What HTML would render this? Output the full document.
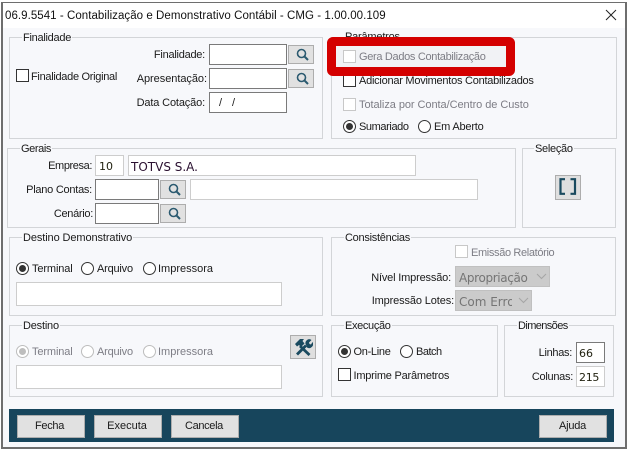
<!DOCTYPE html>
<html><head><meta charset="utf-8">
<style>
html,body{margin:0;padding:0;background:#fff}
#w{position:relative;width:628px;height:450px;overflow:hidden;background:#fff;font-family:"Liberation Sans",sans-serif;font-size:11px;color:#1a1a1a}
#w div,#w span,#w svg{position:absolute;box-sizing:border-box}
.t{white-space:nowrap;line-height:16px;height:16px;margin-top:1px}
.r{text-align:right}
.g{color:#7d7d85}
.gb{border:1px solid #d3d5d8}
.lg{background:#f7f8fb;padding:0 1px;line-height:12px;height:12px;white-space:nowrap;margin-top:1px}
.i{background:#fff;border:1px solid #cdcdcd}
.d{background:#fff;border:1px solid #7a7a7a}
.b{background:#e1e1e1;border:1px solid #adadad}
.bt{background:#e1e1e1;border:1px solid #adadad;text-align:center;line-height:21px;height:23px;width:68px;top:415px}
.c{width:13px;height:13px;background:#fff;border:1px solid #333}
.c.x{border-color:#c8c8c8}
.o{width:13px;height:13px;border-radius:50%;background:#fff;border:1px solid #333}
.o.x{border-color:#bdbdbd}
.o i{position:absolute;left:2px;top:2px;width:7px;height:7px;border-radius:50%;background:#333}
.o.x i{background:#bdbdbd}
.w{font-family:"DejaVu Sans",sans-serif;font-size:12px;letter-spacing:0}
.n{font-family:"DejaVu Sans",sans-serif;font-size:11px;letter-spacing:0}
</style></head><body>
<div id="w">
<div style="left:1px;top:2px;width:626px;height:447px;background:#f7f8fb;border:1px solid #6e6e6e;border-width:1px 2px 2px 2px"></div>
<div style="left:3px;top:3px;width:622px;height:25px;background:#fff"></div>
<div class="t" style="left:5px;top:7px;font-size:11.5px;letter-spacing:.05px;color:#111">06.9.5541 - Contabilização e Demonstrativo Contábil - CMG - 1.00.00.109</div>
<svg style="left:605px;top:9px" width="12" height="12"><path d="M1 1L11 11M11 1L1 11" stroke="#222" stroke-width="1" fill="none"/></svg>

<!-- groups -->
<div class="gb" style="left:9px;top:37px;width:314px;height:102px"></div>
<div class="lg" style="left:22px;top:31px;letter-spacing:-.27px">Finalidade</div>
<div class="gb" style="left:331px;top:37px;width:286px;height:102px"></div>
<div class="lg" style="left:344px;top:30px;letter-spacing:-.2px">Parâmetros</div>
<div class="gb" style="left:7px;top:148px;width:509px;height:80px"></div>
<div class="lg" style="left:20px;top:142px;letter-spacing:-.4px">Gerais</div>
<div class="gb" style="left:522px;top:148px;width:94px;height:80px"></div>
<div class="lg" style="left:534px;top:142px;letter-spacing:-.3px">Seleção</div>
<div class="gb" style="left:9px;top:237px;width:314px;height:79px"></div>
<div class="lg" style="left:22px;top:231px;letter-spacing:-.1px">Destino Demonstrativo</div>
<div class="gb" style="left:331px;top:237px;width:285px;height:79px"></div>
<div class="lg" style="left:344px;top:231px;letter-spacing:-.27px">Consistências</div>
<div class="gb" style="left:9px;top:325px;width:314px;height:72px"></div>
<div class="lg" style="left:22px;top:319px;letter-spacing:-.2px">Destino</div>
<div class="gb" style="left:331px;top:325px;width:167px;height:72px"></div>
<div class="lg" style="left:344px;top:319px;letter-spacing:-.35px">Execução</div>
<div class="gb" style="left:504px;top:325px;width:110px;height:72px"></div>
<div class="lg" style="left:517px;top:319px;letter-spacing:-.6px">Dimensões</div>

<!-- Finalidade -->
<div class="c" style="left:16px;top:69px"></div>
<div class="t" style="left:31px;top:68px;letter-spacing:-.3px">Finalidade Original</div>
<div class="t r" style="left:110px;width:95px;top:46px;letter-spacing:-.25px">Finalidade:</div>
<div class="t r" style="left:110px;width:97px;top:70px;letter-spacing:-.05px">Apresentação:</div>
<div class="t r" style="left:110px;width:95px;top:94px;letter-spacing:-.15px">Data Cotação:</div>
<div class="d" style="left:209px;top:44px;width:78px;height:21px"></div>
<div class="d" style="left:209px;top:68px;width:78px;height:21px"></div>
<div class="d" style="left:209px;top:92px;width:78px;height:21px"></div>
<div class="t" style="left:219px;top:94px">/</div>
<div class="t" style="left:232px;top:94px">/</div>
<div class="b" style="left:288px;top:45px;width:26px;height:19px"><svg style="left:7px;top:2px" width="13" height="13"><circle cx="5.500" cy="5.500" r="4" fill="none" stroke="#2b5a70" stroke-width="1.6"/><path d="M8.500 8.500L12 12" stroke="#2b5a70" stroke-width="2"/></svg></div>
<div class="b" style="left:288px;top:69px;width:26px;height:19px"><svg style="left:7px;top:2px" width="13" height="13"><circle cx="5.500" cy="5.500" r="4" fill="none" stroke="#2b5a70" stroke-width="1.6"/><path d="M8.500 8.500L12 12" stroke="#2b5a70" stroke-width="2"/></svg></div>

<!-- Parametros -->
<div class="c" style="left:343px;top:74px"></div>
<div class="t" style="left:359px;top:72px;letter-spacing:-.25px">Adicionar Movimentos Contabilizados</div>
<div class="c x" style="left:343px;top:98px"></div>
<div class="t g" style="left:359px;top:96px;letter-spacing:-.06px">Totaliza por Conta/Centro de Custo</div>
<div class="o" style="left:343px;top:120px"><i></i></div>
<div class="t" style="left:359px;top:118px;letter-spacing:-.4px">Sumariado</div>
<div class="o" style="left:418px;top:120px"></div>
<div class="t" style="left:434px;top:118px;letter-spacing:-.2px">Em Aberto</div>
<!-- red box -->
<div style="left:327px;top:37px;width:188px;height:39px;border:9px solid #d40000;border-radius:6px;background:#f1f2f5"></div>
<div class="c x" style="left:343px;top:50px"></div>
<div class="t g" style="left:359px;top:48px;letter-spacing:-.32px">Gera Dados Contabilização</div>

<!-- Gerais -->
<div class="t r" style="left:20px;width:72px;top:157px;letter-spacing:-.4px">Empresa:</div>
<div class="t r" style="left:10px;width:82px;top:181px;letter-spacing:-.25px">Plano Contas:</div>
<div class="t r" style="left:20px;width:73px;top:205px;letter-spacing:-.3px">Cenário:</div>
<div class="i" style="left:95px;top:155px;width:29px;height:21px"></div>
<div class="t n" style="left:99px;top:158px;color:#221">10</div>
<div class="i" style="left:128px;top:155px;width:288px;height:21px"></div>
<div class="t w" style="left:131px;top:158px;color:#2a1030">TOTVS S.A.</div>
<div class="d" style="left:95px;top:179px;width:64px;height:21px"></div>
<div class="b" style="left:160px;top:180px;width:26px;height:19px"><svg style="left:7px;top:2px" width="13" height="13"><circle cx="5.500" cy="5.500" r="4" fill="none" stroke="#2b5a70" stroke-width="1.6"/><path d="M8.500 8.500L12 12" stroke="#2b5a70" stroke-width="2"/></svg></div>
<div class="i" style="left:190px;top:179px;width:288px;height:21px"></div>
<div class="d" style="left:95px;top:203px;width:64px;height:21px"></div>
<div class="b" style="left:160px;top:204px;width:26px;height:19px"><svg style="left:7px;top:2px" width="13" height="13"><circle cx="5.500" cy="5.500" r="4" fill="none" stroke="#2b5a70" stroke-width="1.6"/><path d="M8.500 8.500L12 12" stroke="#2b5a70" stroke-width="2"/></svg></div>

<!-- Selecao -->
<div class="b" style="left:555px;top:175px;width:26px;height:25px;background:#dfdfdf"><svg style="left:3px;top:2px" width="18" height="18"><path d="M6 1.200H1.500V15.800H6M11.500 1.200H16V15.800H11.500" fill="none" stroke="#1a4a5f" stroke-width="2.2"/></svg></div>

<!-- Destino Demonstrativo -->
<div class="o" style="left:16px;top:262px"><i></i></div>
<div class="t" style="left:32px;top:260px;letter-spacing:-.12px">Terminal</div>
<div class="o" style="left:81px;top:262px"></div>
<div class="t" style="left:97px;top:260px;letter-spacing:-.2px">Arquivo</div>
<div class="o" style="left:143px;top:262px"></div>
<div class="t" style="left:158px;top:260px">Impressora</div>
<div class="i" style="left:16px;top:282px;width:266px;height:24px"></div>

<!-- Consistencias -->
<div class="c x" style="left:455px;top:245px"></div>
<div class="t g" style="left:471px;top:244px;letter-spacing:-.35px">Emissão Relatório</div>
<div class="t r" style="left:350px;width:101px;top:269px;letter-spacing:-.17px">Nível Impressão:</div>
<div class="t r" style="left:350px;width:104px;top:292px;letter-spacing:-.13px">Impressão Lotes:</div>
<div style="left:455px;top:266px;width:95px;height:21px;background:#cbcbcb;border:1px solid #c0c0c0"></div>
<div class="t w" style="left:459px;top:269px;color:#757575;letter-spacing:-.35px">Apropriação</div>
<svg style="left:536px;top:273px" width="11" height="7"><path d="M1 1L5.500 5.500L10 1" fill="none" stroke="#a5a5a5" stroke-width="1"/></svg>
<div style="left:455px;top:290px;width:77px;height:21px;background:#cbcbcb;border:1px solid #c0c0c0"></div>
<div class="t w" style="left:459px;top:293px;width:53px;overflow:hidden;color:#757575">Com Erro</div>
<svg style="left:518px;top:297px" width="11" height="7"><path d="M1 1L5.500 5.500L10 1" fill="none" stroke="#a5a5a5" stroke-width="1"/></svg>

<!-- Destino -->
<div class="o x" style="left:16px;top:345px"><i></i></div>
<div class="t g" style="left:32px;top:343px;letter-spacing:-.12px">Terminal</div>
<div class="o x" style="left:81px;top:345px"></div>
<div class="t g" style="left:97px;top:343px;letter-spacing:-.2px">Arquivo</div>
<div class="o x" style="left:143px;top:345px"></div>
<div class="t g" style="left:158px;top:343px">Impressora</div>
<div class="i" style="left:16px;top:365px;width:266px;height:24px"></div>
<div class="b" style="left:290px;top:335px;width:26px;height:24px;background:#dfdfdf"><svg style="left:3px;top:2px" width="19" height="18"><path d="M6 8L15.500 17" stroke="#1a4a5f" stroke-width="2.8" fill="none"/><path d="M12 7.500L3 16.500" stroke="#1a4a5f" stroke-width="2.8" fill="none"/><path d="M1 6L6 1H10L8.500 3L10.500 5.500L7 9L5 7L3 8.500Z" fill="#1a4a5f"/><path d="M12 7A3.800 3.800 0 0 1 17.500 2L15 4.500L15.500 6L17 6.500L18.500 4A4 4 0 0 1 13 9.500Z" fill="#1a4a5f"/></svg></div>

<!-- Execucao -->
<div class="o" style="left:338px;top:345px"><i></i></div>
<div class="t" style="left:353.500px;top:343px;letter-spacing:-.3px">On-Line</div>
<div class="o" style="left:400px;top:345px"></div>
<div class="t" style="left:416px;top:343px;letter-spacing:-.5px">Batch</div>
<div class="c" style="left:338px;top:368px"></div>
<div class="t" style="left:353.500px;top:367px;letter-spacing:-.22px">Imprime Parâmetros</div>

<!-- Dimensoes -->
<div class="t r" style="left:520px;width:52px;top:344px;letter-spacing:-.3px">Linhas:</div>
<div class="t r" style="left:520px;width:53px;top:368px;letter-spacing:-.28px">Colunas:</div>
<div class="d" style="left:576px;top:342px;width:29px;height:21px"></div>
<div class="t n" style="left:579px;top:345px;color:#221">66</div>
<div class="i" style="left:576px;top:366px;width:29px;height:21px"></div>
<div class="t n" style="left:579px;top:369px;color:#221;letter-spacing:-.3px">215</div>

<!-- Footer -->
<div style="left:9px;top:409px;width:605px;height:33px;background:#17455c"></div>
<div class="bt" style="left:17px;letter-spacing:-.3px;padding-right:3px">Fecha</div>
<div class="bt" style="left:94px;padding-right:2px">Executa</div>
<div class="bt" style="left:171px;letter-spacing:-.35px;padding-right:2px">Cancela</div>
<div class="bt" style="left:539px;letter-spacing:-.25px;padding-right:1px">Ajuda</div>
</div>
</body></html>
